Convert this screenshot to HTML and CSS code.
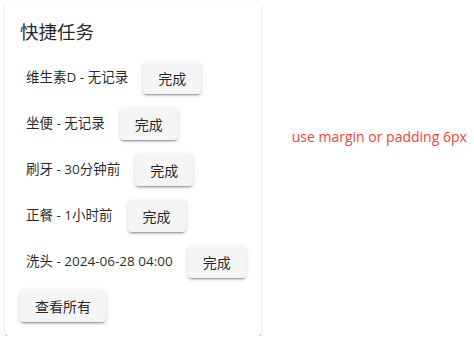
FILE: index.html
```html
<!DOCTYPE html>
<html lang="zh-CN">
<head>
  <meta charset="UTF-8">
  <meta name="viewport" content="width=device-width, initial-scale=1.0">
  <title>快捷任务</title>
  <link rel="stylesheet" href="styles.css">
</head>
<body>
  <div class="page">
    <div class="card">
      <h2 class="card-title">快捷任务</h2>

      <div class="task">
        <span class="task-label">维生素D - 无记录</span>
        <button class="btn">完成</button>
      </div>
      <div class="task">
        <span class="task-label">坐便 - 无记录</span>
        <button class="btn">完成</button>
      </div>
      <div class="task">
        <span class="task-label">刷牙 - 30分钟前</span>
        <button class="btn">完成</button>
      </div>
      <div class="task">
        <span class="task-label">正餐 - 1小时前</span>
        <button class="btn">完成</button>
      </div>
      <div class="task">
        <span class="task-label">洗头 - 2024-06-28 04:00</span>
        <button class="btn">完成</button>
      </div>

      <button class="btn view-all">查看所有</button>
    </div>

    <p class="note">use margin or padding 6px</p>
  </div>
</body>
</html>
```

FILE: styles.css
```css
body {
  margin: 0;
  padding: 0;
  font-family: "Open Sans", "Noto Sans CJK SC", sans-serif;
  background: #ffffff;
  color: rgba(0, 0, 0, 0.87);
}

.page {
  display: flex;
  align-items: flex-start;
  padding: 2px 0 0 5px;
}

.card {
  display: flex;
  flex-direction: column;
  align-items: flex-start;
  padding: 15px 15px 14px;
  background: #ffffff;
  border-radius: 4px;
  box-shadow: 0 2px 1px -1px rgba(0, 0, 0, 0.2),
    0 1px 1px 0 rgba(0, 0, 0, 0.14),
    0 1px 3px 0 rgba(0, 0, 0, 0.12);
}

.card-title {
  margin: 0 0 8px;
  font-size: 18.5px;
  font-weight: 400;
  line-height: 30px;
}

.task {
  display: flex;
  align-items: center;
}

.task-label {
  margin: 0 15px 2px 6px;
  font-size: 13.5px;
  line-height: 20px;
}

.btn {
  margin: 7px 0;
  padding: 0 15px;
  height: 32px;
  font-family: inherit;
  font-size: 14px;
  color: rgba(0, 0, 0, 0.87);
  background-color: #f5f5f5;
  border: none;
  border-radius: 4px;
  cursor: pointer;
  box-shadow: 0 3px 1px -2px rgba(0, 0, 0, 0.2),
    0 2px 2px 0 rgba(0, 0, 0, 0.14),
    0 1px 5px 0 rgba(0, 0, 0, 0.12);
}

.btn:hover {
  background-color: #e8e8e8;
}

.view-all {
  margin: 5px 0 0;
}

.note {
  margin: 125px 0 0 31px;
  font-size: 14px;
  line-height: 20px;
  color: #f44336;
}
```
